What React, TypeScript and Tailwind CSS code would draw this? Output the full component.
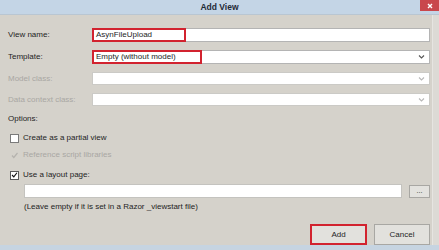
import React from 'react';

const Chevron: React.FC<{ muted?: boolean }> = ({ muted }) => (
  <svg width="7" height="5" viewBox="0 0 7 5" className="absolute right-[4px] top-1/2 -translate-y-1/2">
    <path d="M1 1 L3.5 3.5 L6 1" fill="none" stroke={muted ? '#b8b8b8' : '#555'} strokeWidth="1.1" />
  </svg>
);

const App: React.FC = () => {
  return (
    <div
      className="w-[439px] h-[250px] bg-[#d5d2cb] flex flex-col overflow-hidden text-[8px] text-[#1e1e1e]"
      style={{ fontFamily: '"Liberation Sans", Arial, sans-serif' }}
    >
      {/* Barra de título */}
      <div className="relative h-[15px] bg-[#c4d5e6] border-b border-[#b9c6d2] flex items-center justify-center shrink-0">
        <span className="font-bold text-[8.5px] text-[#1f2a36]">Add View</span>
        <div className="absolute right-0 top-0 w-[19px] h-[11px] bg-[#c9474c] flex items-center justify-center">
          <svg width="6" height="6" viewBox="0 0 6 6">
            <path d="M1 1 L5 5 M5 1 L1 5" stroke="#fff" strokeWidth="1.4" />
          </svg>
        </div>
      </div>

      <div className="flex flex-1">
        {/* Conteúdo */}
        <div className="flex-1 flex flex-col pl-[8px] pr-[2px]">
          <div className="mt-[13px] flex h-[14px] items-center">
            <span className="w-[84px]">View name:</span>
            <div className="relative flex-1 h-full bg-white border border-[#b4b4b4]">
              <div className="absolute -left-[1px] -top-[1px] w-[94px] h-[14px] border-2 border-[#d2232f] flex items-center pl-[2px]">
                AsynFileUpload
              </div>
            </div>
          </div>

          <div className="mt-[8px] flex h-[14px] items-center">
            <span className="w-[84px]">Template:</span>
            <div className="relative flex-1 h-full bg-white border border-[#b4b4b4]">
              <div className="absolute -left-[1px] -top-[1px] w-[110px] h-[14px] border-2 border-[#d2232f] flex items-center pl-[2px]">
                Empty (without model)
              </div>
              <Chevron />
            </div>
          </div>

          <div className="mt-[8px] flex h-[13px] items-center">
            <span className="w-[84px] text-[#a9a7a3]">Model class:</span>
            <div className="relative flex-1 h-full bg-white border border-[#cbcac6]">
              <Chevron muted />
            </div>
          </div>

          <div className="mt-[8px] flex h-[13px] items-center">
            <span className="w-[84px] text-[#a9a7a3]">Data context class:</span>
            <div className="relative flex-1 h-full bg-white border border-[#cbcac6]">
              <Chevron muted />
            </div>
          </div>

          <div className="mt-[8px] h-[10px] flex items-center">Options:</div>

          <div className="mt-[9px] h-[10px] flex items-center">
            <div className="ml-[2px] w-[9px] h-[9px] bg-white border border-[#7a7a7a]" />
            <span className="ml-[4px]">Create as a partial view</span>
          </div>

          <div className="mt-[7px] h-[10px] flex items-center">
            <svg width="9" height="9" viewBox="0 0 9 9" className="ml-[2px]">
              <path d="M2 4.5 L3.8 6.5 L7.5 2" fill="none" stroke="#b5b3ae" strokeWidth="1.2" />
            </svg>
            <span className="ml-[4px] text-[#a9a7a3]">Reference script libraries</span>
          </div>

          <div className="mt-[10px] h-[10px] flex items-center">
            <div className="ml-[2px] w-[9px] h-[9px] bg-white border border-[#5a5a5a] flex items-center justify-center">
              <svg width="8" height="8" viewBox="0 0 8 8">
                <path d="M1.2 4 L3.2 6.2 L6.8 1.4" fill="none" stroke="#111" strokeWidth="1.3" />
              </svg>
            </div>
            <span className="ml-[4px]">Use a layout page:</span>
          </div>

          <div className="mt-[4px] flex items-center pl-[16px]">
            <div className="w-[378px] h-[14px] bg-white border border-[#c4c3bf]" />
            <div className="ml-[7px] w-[21px] h-[13px] bg-[#e3e2de] border border-[#a8a7a3] flex items-center justify-center text-[7px] leading-none pb-[2px]">
              ...
            </div>
          </div>

          <div className="mt-[4px] h-[10px] flex items-center pl-[16px]">
            (Leave empty if it is set in a Razor _viewstart file)
          </div>

          <div className="mt-[12px] flex justify-end">
            <div className="w-[57px] h-[21px] border-2 border-[#d2232f] flex">
              <div className="flex-1 bg-[#e2e1dd] flex items-center justify-center">Add</div>
            </div>
            <div className="ml-[7px] w-[56px] h-[21px] bg-[#e2e1dd] border border-[#a8a7a3] flex items-center justify-center">
              Cancel
            </div>
          </div>
        </div>

        {/* Borda direita */}
        <div className="w-[7px] bg-[#dcdad5] border-l border-[#e6e5e1]" />
      </div>

      {/* Borda inferior */}
      <div className="h-[5px] bg-[#c6d4e1] shrink-0" />
    </div>
  );
};

export default App;
